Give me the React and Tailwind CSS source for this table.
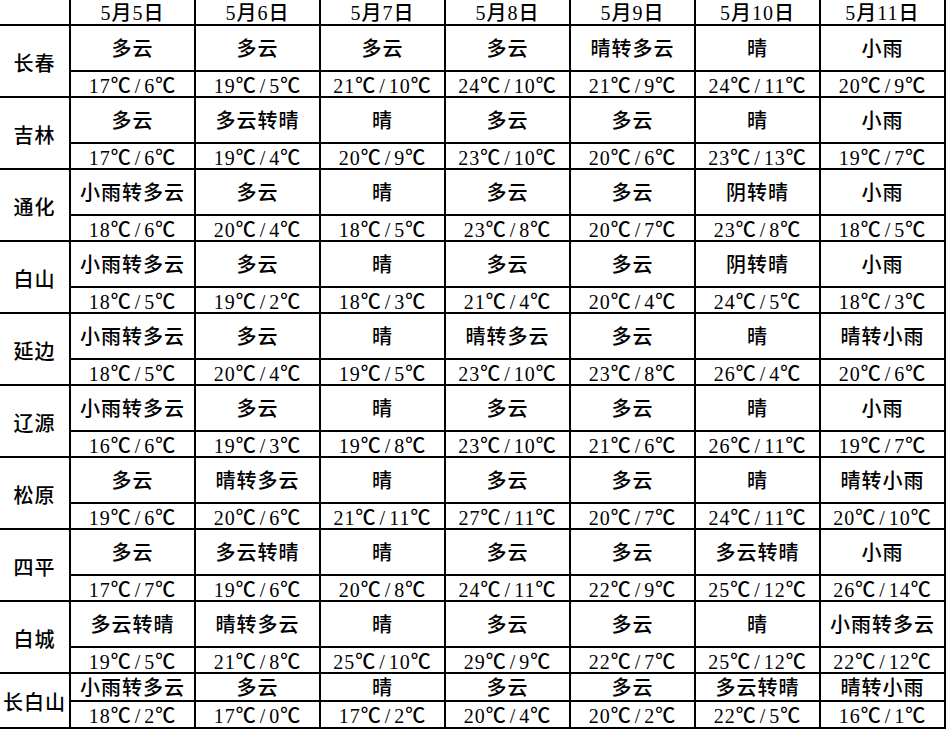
import React from "react";

const dates = ["5月5日", "5月6日", "5月7日", "5月8日", "5月9日", "5月10日", "5月11日"];

const data = [
  ["长春", ["多云", "多云", "多云", "多云", "晴转多云", "晴", "小雨"], ["17/6", "19/5", "21/10", "24/10", "21/9", "24/11", "20/9"]],
  ["吉林", ["多云", "多云转晴", "晴", "多云", "多云", "晴", "小雨"], ["17/6", "19/4", "20/9", "23/10", "20/6", "23/13", "19/7"]],
  ["通化", ["小雨转多云", "多云", "晴", "多云", "多云", "阴转晴", "小雨"], ["18/6", "20/4", "18/5", "23/8", "20/7", "23/8", "18/5"]],
  ["白山", ["小雨转多云", "多云", "晴", "多云", "多云", "阴转晴", "小雨"], ["18/5", "19/2", "18/3", "21/4", "20/4", "24/5", "18/3"]],
  ["延边", ["小雨转多云", "多云", "晴", "晴转多云", "多云", "晴", "晴转小雨"], ["18/5", "20/4", "19/5", "23/10", "23/8", "26/4", "20/6"]],
  ["辽源", ["小雨转多云", "多云", "晴", "多云", "多云", "晴", "小雨"], ["16/6", "19/3", "19/8", "23/10", "21/6", "26/11", "19/7"]],
  ["松原", ["多云", "晴转多云", "晴", "多云", "多云", "晴", "晴转小雨"], ["19/6", "20/6", "21/11", "27/11", "20/7", "24/11", "20/10"]],
  ["四平", ["多云", "多云转晴", "晴", "多云", "多云", "多云转晴", "小雨"], ["17/7", "19/6", "20/8", "24/11", "22/9", "25/12", "26/14"]],
  ["白城", ["多云转晴", "晴转多云", "晴", "多云", "多云", "晴", "小雨转多云"], ["19/5", "21/8", "25/10", "29/9", "22/7", "25/12", "22/12"]],
  ["长白山", ["小雨转多云", "多云", "晴", "多云", "多云", "多云转晴", "晴转小雨"], ["18/2", "17/0", "17/2", "20/4", "20/2", "22/5", "16/1"]],
];

const font = { fontFamily: '"Liberation Serif", "Noto Sans CJK SC", serif' };

function Temp({ v }) {
  const [hi, lo] = v.split("/");
  return (
    <span className="whitespace-nowrap tracking-[1px]">
      {hi}℃<span className="mx-[3px]">/</span>{lo}℃
    </span>
  );
}

export default function App() {
  return (
    <div className="w-[947px] h-[731px] bg-white">
      <div
        className="grid w-[946px] bg-black pr-[2px] pb-[2px] gap-[2px] text-[20px] leading-none text-black font-medium font-['Liberation_Serif','Noto_Sans_CJK_SC',serif]"
        style={{
          gridTemplateColumns: "69px repeat(7, 123px)",
          gridTemplateRows: "24px repeat(9, 44px 24px) 26px 25px",
          ...font,
        }}
      >
        <div className="bg-white" />
        {dates.map((d) => (
          <div key={d} className="bg-white flex items-end justify-center pb-[1px] tracking-[1px]">
            {d}
          </div>
        ))}
        {data.map(([city, weather, temps]) => (
          <React.Fragment key={city}>
            <div className="bg-white row-span-2 flex items-center justify-center pt-[5px] tracking-[1px]">
              {city}
            </div>
            {weather.map((w, i) => (
              <div key={"w" + i} className="bg-white flex items-center justify-center pt-[2px] tracking-[1px]">
                {w}
              </div>
            ))}
            {temps.map((t, i) => (
              <div key={"t" + i} className="bg-white flex items-center justify-center pt-[3px]">
                <Temp v={t} />
              </div>
            ))}
          </React.Fragment>
        ))}
      </div>
    </div>
  );
}
